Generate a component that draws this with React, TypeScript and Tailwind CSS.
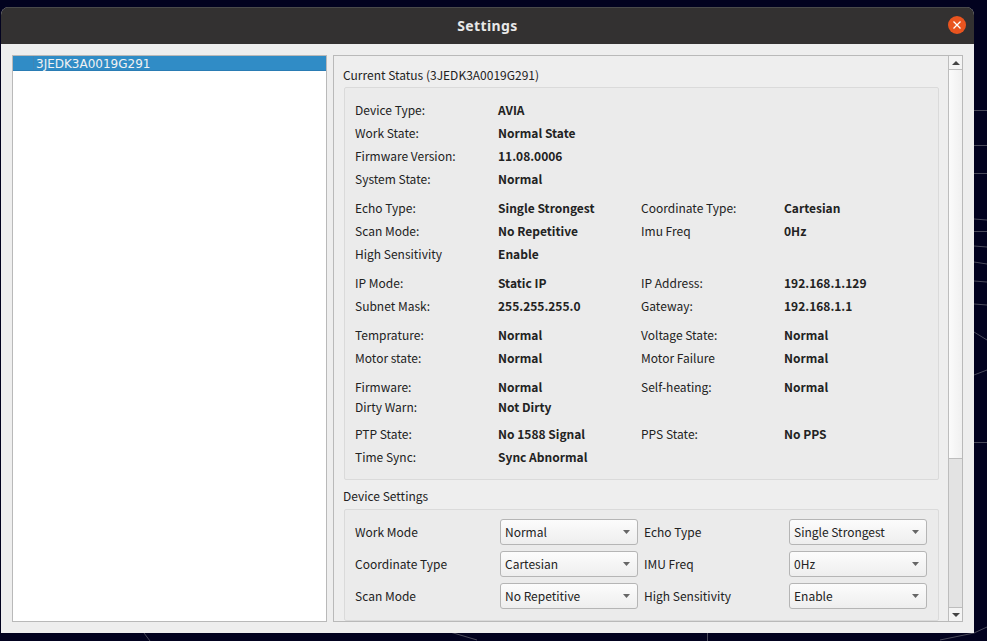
const cjk = "font-['Noto_Sans_CJK_SC','Noto_Sans',sans-serif]"

function Row({ a, b, c, d, h = 'h-[23px]' }: { a: string; b: string; c?: string; d?: string; h?: string }) {
  return (
    <div className={'flex items-center ' + h}>
      <span className="w-[143px]">{a}</span>
      <span className="w-[143px] font-bold">{b}</span>
      {c && <span className="w-[143px]">{c}</span>}
      {d && <span className="font-bold">{d}</span>}
    </div>
  )
}

function Combo({ value }: { value: string }) {
  return (
    <div className="flex h-[26px] w-[138px] items-center rounded-[3px] border border-[#b5b5b5] bg-gradient-to-b from-[#fcfcfc] to-[#eeeeee] pl-[4px] pr-[7px]">
      <span className="flex-1">{value}</span>
      <svg width="7" height="4" viewBox="0 0 7 4"><path d="M0 0h7L3.5 4z" fill="#666" /></svg>
    </div>
  )
}

function SettingRow({ a, b, c, d }: { a: string; b: string; c: string; d: string }) {
  return (
    <div className="flex h-[32px] items-center">
      <span className="w-[145px]">{a}</span>
      <Combo value={b} />
      <span className="ml-[6px] w-[145px]">{c}</span>
      <Combo value={d} />
    </div>
  )
}

export default function App() {
  return (
    <div className={'relative h-[641px] w-[987px] overflow-hidden bg-[#02021f] text-[12px] leading-none text-[#222] ' + cjk}>
      {/* desktop wallpaper lines */}
      <svg className="absolute inset-0" width="987" height="641" fill="none" stroke="#4a4a5a" strokeWidth="1">
        <path d="M974 110.5h13M974 145.5h13M974 173.5h13M974 219l13 1M974 231.5h13M974 246l13 1M974 262l13 2M974 281l13 1M974 304l13 1M974 332l13 8M974 375l13-5M974 442.5h13" />
        <path d="M450 632l27 8M144 633l6 8M707.5 633v8M940 640l34-7 13-6" />
      </svg>
      <div className="absolute left-[1px] top-[7px] flex h-[626px] w-[973px] flex-col overflow-hidden rounded-t-[8px] bg-[#eeeeee]">
        <div className="relative flex h-[37px] shrink-0 items-center justify-center border-t border-[#4a4a4a] bg-[#333131]">
          <span className="font-['Noto_Sans',sans-serif] text-[14px] font-bold tracking-[0.4px] text-[#e8e8e8]">Settings</span>
          <div className="absolute right-[8px] top-[8px] flex h-[18px] w-[18px] items-center justify-center rounded-full bg-[#e9541f]">
            <svg width="8" height="8" viewBox="0 0 8 8"><path d="M0.5 0.5l7 7M7.5 0.5l-7 7" stroke="#fff" strokeWidth="1.3" /></svg>
          </div>
        </div>
        <div className="flex gap-[6px] pl-[11px] pt-[11px]">
          <div className="h-[567px] w-[315px] border border-[#b9b9b9] bg-white">
            <div className="h-[15px] border-b border-[#2a7cb4] bg-[#308cc6] pl-[20px]">
              <div className="h-full border-l border-[#3f85b5] pl-[2px] font-['DejaVu_Sans',sans-serif] text-[12px] leading-[16px] text-[#f2f2f2]">
                3JEDK3A0019G291
              </div>
            </div>
          </div>
          <div className="flex h-[567px] w-[630px] border border-[#b9b9b9] bg-[#eeeeee]">
            <div className="flex h-full min-w-0 flex-1 flex-col overflow-hidden pl-[10px]">
              <div className="-ml-px mt-[12px] h-[19px] leading-[13px]">Current Status (3JEDK3A0019G291)</div>
              <div className="h-[393px] w-[595px] shrink-0 rounded-[2px] border border-[#dadada] bg-[#ebebeb] px-[10px] pt-[10px]">
                <Row a="Device Type:" b="AVIA" />
                <Row a="Work State:" b="Normal State" />
                <Row a="Firmware Version:" b="11.08.0006" />
                <Row a="System State:" b="Normal" />
                <div className="h-[6px]" />
                <Row a="Echo Type:" b="Single Strongest" c="Coordinate Type:" d="Cartesian" />
                <Row a="Scan Mode:" b="No Repetitive" c="Imu Freq" d="0Hz" />
                <Row a="High Sensitivity" b="Enable" />
                <div className="h-[6px]" />
                <Row a="IP Mode:" b="Static IP" c="IP Address:" d="192.168.1.129" />
                <Row a="Subnet Mask:" b="255.255.255.0" c="Gateway:" d="192.168.1.1" />
                <div className="h-[6px]" />
                <Row a="Temprature:" b="Normal" c="Voltage State:" d="Normal" />
                <Row a="Motor state:" b="Normal" c="Motor Failure" d="Normal" />
                <div className="h-[6px]" />
                <Row a="Firmware:" b="Normal" c="Self-heating:" d="Normal" />
                <Row a="Dirty Warn:" b="Not Dirty" h="h-[17px]" />
                <div className="h-[7px]" />
                <Row a="PTP State:" b="No 1588 Signal" c="PPS State:" d="No PPS" />
                <Row a="Time Sync:" b="Sync Abnormal" />
              </div>
              <div className="-ml-px mt-[9px] h-[20px] leading-[13px]">Device Settings</div>
              <div className="w-[595px] flex-1 rounded-[2px] border border-[#dadada] bg-[#ebebeb] px-[10px] pt-[6px]">
                <SettingRow a="Work Mode" b="Normal" c="Echo Type" d="Single Strongest" />
                <SettingRow a="Coordinate Type" b="Cartesian" c="IMU Freq" d="0Hz" />
                <SettingRow a="Scan Mode" b="No Repetitive" c="High Sensitivity" d="Enable" />
              </div>
            </div>
            {/* scrollbar */}
            <div className="flex w-[14px] shrink-0 flex-col border-l border-[#bdbdbd] bg-[#e3e3e3]">
              <div className="flex h-[14px] items-center justify-center border-b border-[#bdbdbd] bg-[#f4f4f4]">
                <svg width="8" height="4" viewBox="0 0 8 4"><path d="M4 0l4 4H0z" fill="#444" /></svg>
              </div>
              <div className="h-[389px] border-b border-[#bdbdbd] bg-gradient-to-r from-[#fbfbfb] to-[#f0f0f0]" />
              <div className="flex-1" />
              <div className="flex h-[14px] items-center justify-center border-t border-[#bdbdbd] bg-[#f4f4f4]">
                <svg width="8" height="4" viewBox="0 0 8 4"><path d="M0 0h8L4 4z" fill="#444" /></svg>
              </div>
            </div>
          </div>
        </div>
      </div>
    </div>
  )
}
